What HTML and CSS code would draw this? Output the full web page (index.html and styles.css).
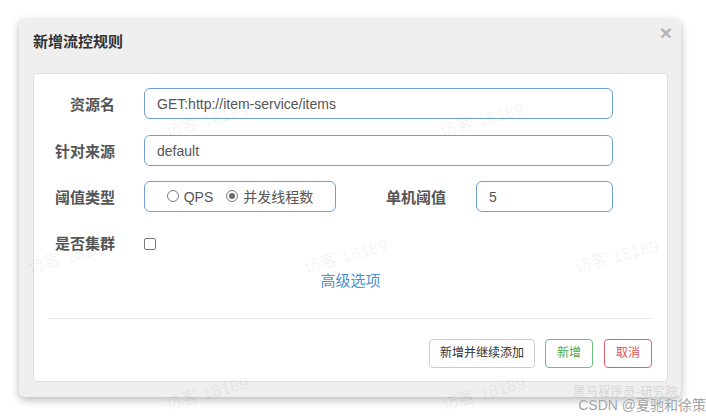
FILE: index.html
```html
<!DOCTYPE html>
<html lang="zh-CN">
<head>
<meta charset="utf-8">
<title>新增流控规则</title>
<link rel="stylesheet" href="styles.css">
</head>
<body>
<div class="dialog">
  <div class="dialog-header">
    <h4 class="dialog-title">新增流控规则</h4>
    <span class="close">×</span>
  </div>
  <div class="panel">
    <div class="form-row row-first">
      <label class="label">资源名</label>
      <input class="input input-wide" type="text" value="GET:http://item-service/items">
    </div>
    <div class="form-row">
      <label class="label">针对来源</label>
      <input class="input input-wide" type="text" value="default">
    </div>
    <div class="form-row">
      <label class="label">阈值类型</label>
      <div class="radio-box">
        <span class="radio"></span><span class="radio-text">QPS</span>
        <span class="radio radio-checked"></span><span class="radio-text">并发线程数</span>
      </div>
      <label class="label label-second">单机阈值</label>
      <input class="input input-small" type="text" value="5">
    </div>
    <div class="form-row row-last">
      <label class="label">是否集群</label>
      <span class="checkbox"></span>
    </div>
    <div class="advanced"><a class="advanced-link">高级选项</a></div>
    <div class="divider"></div>
    <div class="actions">
      <button class="btn btn-default">新增并继续添加</button>
      <button class="btn btn-success">新增</button>
      <button class="btn btn-danger">取消</button>
    </div>
  </div>
</div>

<div class="watermarks">
  <span class="wm wm-a1">访客 18189</span>
  <span class="wm wm-a2">访客 18189</span>
  <span class="wm wm-a3">访客 18189</span>
  <span class="wm wm-b1">访客 18189</span>
  <span class="wm wm-b2">访客 18189</span>
  <span class="wm wm-c1">访客 18189</span>
  <span class="wm wm-c2">访客 18189</span>
  <span class="wm wm-c3">访客 18189</span>
  <span class="wm wm-d1">访客 18189</span>
  <span class="wm wm-d2">访客 18189</span>
</div>
<div class="credit">
  <div class="credit-org">黑马程序员-研究院</div>
  <div class="credit-csdn">CSDN @夏驰和徐策</div>
</div>
</body>
</html>
```

FILE: styles.css
```css
html, body {
  margin: 0;
  padding: 0;
}
body {
  width: 706px;
  height: 416px;
  overflow: hidden;
  position: relative;
  background: #ffffff;
  font-family: "Liberation Sans", Arial, "Noto Sans CJK SC", sans-serif;
}

.dialog {
  margin: 19px 0 0 19px;
  width: 662px;
  height: 378px;
  box-sizing: border-box;
  background: #efefef;
  border-radius: 6px;
  box-shadow: 0 3px 9px rgba(0, 0, 0, 0.28);
  padding: 0 13px 15px 14px;
  display: flex;
  flex-direction: column;
}

.dialog-header {
  height: 54px;
  flex: none;
  display: flex;
  align-items: flex-start;
  justify-content: space-between;
  padding-top: 13px;
  box-sizing: border-box;
}
.dialog-title {
  margin: 0;
  font-size: 15px;
  line-height: 20px;
  font-weight: bold;
  color: #333333;
}
.close {
  font-size: 21px;
  line-height: 20px;
  font-weight: bold;
  color: #b4b4b4;
  margin-top: -9px;
  margin-right: -4px;
}

.panel {
  flex: 1;
  background: #ffffff;
  border: 1px solid #dddddd;
  border-radius: 4px;
  padding: 14px 15px 13px 15px;
  display: flex;
  flex-direction: column;
}

.form-row {
  display: flex;
  align-items: center;
  height: 31px;
  margin-bottom: 15px;
  flex: none;
}
.form-row.row-first {
  margin-bottom: 16px;
}
.form-row.row-last {
  margin-bottom: 0;
}

.label {
  width: 66px;
  flex: none;
  text-align: right;
  margin-right: 29px;
  font-size: 15px;
  line-height: 20px;
  font-weight: bold;
  color: #555555;
  padding-top: 2px;
}
.label-second {
  width: 110px;
  margin-left: 0;
  margin-right: 30px;
}

.input {
  box-sizing: border-box;
  height: 31px;
  border: 1px solid #6f9fd3;
  border-radius: 6px;
  padding: 0 12px;
  font-family: "Liberation Sans", Arial, sans-serif;
  font-size: 14px;
  color: #555555;
  background: #ffffff;
  outline: none;
  margin: 0;
}
.input-wide {
  width: 469px;
}
.input-small {
  width: 137px;
}

.radio-box {
  box-sizing: border-box;
  width: 192px;
  height: 31px;
  border: 1px solid #6f9fd3;
  border-radius: 6px;
  display: flex;
  align-items: center;
  justify-content: center;
  font-size: 14px;
  color: #555555;
}
.radio {
  box-sizing: border-box;
  width: 12px;
  height: 12px;
  border: 1px solid #7a7a7a;
  border-radius: 50%;
  position: relative;
  margin-top: -1px;
}
.radio-checked::after {
  content: "";
  position: absolute;
  left: 2px;
  top: 2px;
  width: 6px;
  height: 6px;
  border-radius: 50%;
  background: #6a6a6a;
}
.radio-text {
  margin-left: 5px;
  margin-right: 13px;
  line-height: 20px;
}
.radio-text:last-child {
  margin-right: 0;
}

.checkbox {
  box-sizing: border-box;
  width: 12px;
  height: 12px;
  border: 1px solid #7a7a7a;
  border-radius: 2px;
  margin-top: 2px;
}

.advanced {
  margin-top: 13px;
  text-align: center;
  line-height: 20px;
  height: 20px;
  flex: none;
}
.advanced-link {
  font-size: 15px;
  color: #4a8fd3;
  cursor: pointer;
}

.divider {
  margin-top: 27px;
  height: 1px;
  background: #e8e8e8;
  flex: none;
}

.actions {
  margin-top: 20px;
  display: flex;
  justify-content: flex-end;
  gap: 10px;
  flex: none;
}
.btn {
  box-sizing: border-box;
  height: 29px;
  padding: 0 10px;
  border-radius: 4px;
  border: 1px solid #cccccc;
  background: #ffffff;
  font-family: "Liberation Sans", Arial, "Noto Sans CJK SC", sans-serif;
  font-size: 12px;
  line-height: 27px;
  color: #333333;
  cursor: pointer;
}
.btn-success {
  border-color: #6cbf7c;
  color: #4cae4c;
  padding: 0 11px;
  margin-right: 1px;
}
.btn-danger {
  border-color: #e0626d;
  color: #d9534f;
  padding: 0 11px;
}

.watermarks {
  position: absolute;
  left: 0;
  top: 0;
  width: 706px;
  height: 416px;
  pointer-events: none;
  overflow: hidden;
}
.wm {
  position: absolute;
  white-space: nowrap;
  font-family: "Liberation Sans", Arial, "Noto Sans CJK SC", sans-serif;
  font-size: 17px;
  line-height: 20px;
  color: rgba(0, 0, 0, 0.06);
  transform: translate(-50%, -50%) rotate(-15deg);
}
.wm-a1 { left: 70px;  top: -15px; }
.wm-a2 { left: 346px; top: -15px; }
.wm-a3 { left: 620px; top: -15px; }
.wm-b1 { left: 207px; top: 121px; }
.wm-b2 { left: 482px; top: 121px; }
.wm-c1 { left: 70px;  top: 257px; }
.wm-c2 { left: 346px; top: 257px; }
.wm-c3 { left: 617px; top: 257px; }
.wm-d1 { left: 207px; top: 394px; }
.wm-d2 { left: 484px; top: 394px; }

.credit {
  position: absolute;
  right: 0;
  top: 384px;
  text-align: right;
  pointer-events: none;
}
.credit-org {
  font-family: "Noto Sans CJK SC", sans-serif;
  font-size: 12px;
  line-height: 13px;
  color: #d6d6d6;
  letter-spacing: 0.5px;
  margin-right: 28px;
}
.credit-csdn {
  font-family: "Liberation Sans", Arial, "Noto Sans CJK SC", sans-serif;
  font-size: 14px;
  line-height: 14px;
  margin-top: 1px;
  color: #a3a3a3;
  text-shadow: 0 0 1px #ffffff;
}
```
